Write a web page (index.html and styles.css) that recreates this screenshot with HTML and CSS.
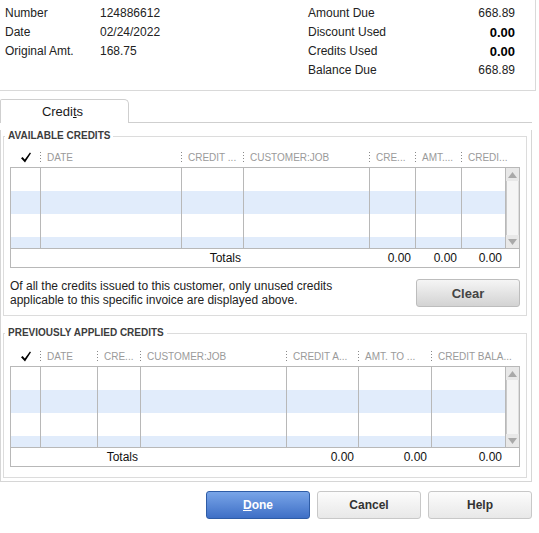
FILE: index.html
```html
<!DOCTYPE html>
<html>
<head>
<meta charset="utf-8">
<link rel="stylesheet" href="styles.css">
</head>
<body>
<div class="top">
  <div class="info">
    <span>Number</span><span>124886612</span>
    <span>Date</span><span>02/24/2022</span>
    <span>Original Amt.</span><span>168.75</span>
  </div>
  <div class="sums">
    <span>Amount Due</span><span class="num">668.89</span>
    <span>Discount Used</span><span class="num strong">0.00</span>
    <span>Credits Used</span><span class="num strong">0.00</span>
    <span>Balance Due</span><span class="num">668.89</span>
  </div>
</div>

<div class="tabs">
  <div class="tab">Credi<u>t</u>s</div>
  <div class="tab-fill"></div>
</div>

<div class="panel">
  <fieldset class="group first">
    <legend>AVAILABLE CREDITS</legend>
    <div class="hdr cols1">
      <div class="hcell check"><svg class="tick" width="10" height="11" viewBox="0 0 10 11"><path d="M0 6.2 L1.6 5 L3.8 7.6 L8.9 0.4 L10 1.2 L4 10.6 Z" fill="#000"/></svg><span class="sep"></span></div>
      <div class="hcell"><span class="ht">DATE</span><span class="sep"></span></div>
      <div class="hcell"><span class="ht">CREDIT ...</span><span class="sep"></span></div>
      <div class="hcell"><span class="ht">CUSTOMER:JOB</span><span class="sep"></span></div>
      <div class="hcell"><span class="ht">CRE...</span><span class="sep"></span></div>
      <div class="hcell"><span class="ht">AMT....</span><span class="sep"></span></div>
      <div class="hcell open"><span class="ht">CREDI...</span></div>
      <div class="hcell"></div>
    </div>
    <div class="grid">
      <div class="body cols1">
        <div class="bcell"></div><div class="bcell"></div><div class="bcell"></div><div class="bcell"></div>
        <div class="bcell"></div><div class="bcell"></div><div class="bcell"></div>
        <div class="scroll">
          <div class="arrow"><svg width="9" height="6" viewBox="0 0 9 6"><path d="M4.5 0 L9 6 L0 6 Z" fill="#a9a9a9"/></svg></div>
          <div class="thumb"></div>
          <div class="arrow"><svg width="9" height="6" viewBox="0 0 9 6"><path d="M0 0 L9 0 L4.5 6 Z" fill="#a9a9a9"/></svg></div>
        </div>
      </div>
      <div class="totals cols1">
        <span></span><span></span><span class="tl">Totals</span><span></span>
        <span class="tv">0.00</span><span class="tv">0.00</span><span class="tv last">0.00</span><span></span>
      </div>
    </div>
    <div class="note-row">
      <p class="note">Of all the credits issued to this customer, only unused credits<br>applicable to this specific invoice are displayed above.</p>
      <button class="btn clear">Clear</button>
    </div>
  </fieldset>

  <fieldset class="group second">
    <legend>PREVIOUSLY APPLIED CREDITS</legend>
    <div class="hdr cols2">
      <div class="hcell check"><svg class="tick" width="10" height="11" viewBox="0 0 10 11"><path d="M0 6.2 L1.6 5 L3.8 7.6 L8.9 0.4 L10 1.2 L4 10.6 Z" fill="#000"/></svg><span class="sep"></span></div>
      <div class="hcell"><span class="ht">DATE</span><span class="sep"></span></div>
      <div class="hcell"><span class="ht">CRE...</span><span class="sep"></span></div>
      <div class="hcell"><span class="ht">CUSTOMER:JOB</span><span class="sep"></span></div>
      <div class="hcell"><span class="ht">CREDIT A...</span><span class="sep"></span></div>
      <div class="hcell"><span class="ht">AMT. TO ...</span><span class="sep"></span></div>
      <div class="hcell open"><span class="ht">CREDIT BALA...</span></div>
      <div class="hcell"></div>
    </div>
    <div class="grid">
      <div class="body cols2">
        <div class="bcell"></div><div class="bcell"></div><div class="bcell"></div><div class="bcell"></div>
        <div class="bcell"></div><div class="bcell"></div><div class="bcell"></div>
        <div class="scroll">
          <div class="arrow"><svg width="9" height="6" viewBox="0 0 9 6"><path d="M4.5 0 L9 6 L0 6 Z" fill="#a9a9a9"/></svg></div>
          <div class="thumb"></div>
          <div class="arrow"><svg width="9" height="6" viewBox="0 0 9 6"><path d="M0 0 L9 0 L4.5 6 Z" fill="#a9a9a9"/></svg></div>
        </div>
      </div>
      <div class="totals cols2">
        <span></span><span></span><span class="tl">Totals</span><span></span>
        <span class="tv">0.00</span><span class="tv">0.00</span><span class="tv last">0.00</span><span></span>
      </div>
    </div>
  </fieldset>
</div>

<div class="actions">
  <button class="btn primary"><u>D</u>one</button>
  <button class="btn plain">Cancel</button>
  <button class="btn plain">Help</button>
</div>
</body>
</html>
```

FILE: styles.css
```css
* { box-sizing: border-box; }

html, body {
  margin: 0;
  padding: 0;
  background: #fff;
}

body {
  width: 539px;
  height: 533px;
  overflow: hidden;
  font-family: "Liberation Sans", Arial, sans-serif;
  font-size: 12px;
  color: #222;
}

/* ---------- top summary ---------- */
.top {
  width: 536px;
  height: 91px;
  border-right: 1px solid #d9d9d9;
  border-bottom: 1px solid #d9d9d9;
  padding: 4px 0 0 5px;
  display: flex;
}

.info {
  display: grid;
  grid-template-columns: 95px auto;
  grid-auto-rows: 19px;
  line-height: 19px;
}

.sums {
  margin-left: auto;
  margin-right: 20px;
  width: 207px;
  display: grid;
  grid-template-columns: 1fr auto;
  grid-auto-rows: 19px;
  line-height: 19px;
}

.num { text-align: right; }
.strong { font-weight: bold; font-size: 13px; color: #000; }

/* ---------- tab ---------- */
.tabs {
  margin-top: 8px;
  width: 532px;
  display: flex;
  height: 24px;
}

.tab {
  width: 129px;
  height: 24px;
  border: 1px solid #cfcfcf;
  border-bottom: none;
  border-radius: 2px 5px 0 0;
  font-size: 13px;
  line-height: 23px;
  text-align: center;
  padding-right: 4px;
  color: #1a1a1a;
  background: #fff;
}

.tab-fill {
  flex: 1;
  border-bottom: 1px solid #cfcfcf;
}

/* ---------- panel ---------- */
.panel {
  width: 532px;
  border-left: 1px solid #d6d6d6;
  border-right: 1px solid #d6d6d6;
  border-bottom: 1px solid #d6d6d6;
  padding: 0 4px 3px 2px;
}

.group {
  margin: 0;
  padding: 0;
  border: 1px solid #dcdcdc;
  min-width: 0;
}

.group.first { margin-top: 7px; padding-bottom: 8px; }
.group.second { margin-top: 11px; padding-bottom: 10px; }

.group legend {
  margin-left: 1px;
  padding: 0 3px;
  font-size: 10px;
  font-weight: bold;
  line-height: 12px;
  color: #3c3c3c;
}

/* ---------- grids ---------- */
.cols1 { display: grid; grid-template-columns: 30px 141px 62px 126px 46px 46px 44px 13px; }
.cols2 { display: grid; grid-template-columns: 30px 57px 43px 146px 72px 73px 74px 13px; }

.hdr {
  margin-left: 7px;
  height: 20px;
  margin-top: 5px;
}
.group.second .hdr { margin-top: 7px; }

.hcell {
  display: flex;
  align-items: center;
  height: 20px;
  overflow: hidden;
  white-space: nowrap;
}

.hcell.open { overflow: visible; }

.hcell.check .tick { margin-left: 10px; }

.ht {
  padding-left: 6px;
  font-size: 10px;
  color: #9a9a9a;
}

.sep {
  margin-left: auto;
  flex: none;
  width: 1px;
  height: 10px;
  background: repeating-linear-gradient(to bottom, #8a8a8a 0 1px, transparent 1px 3px);
}

.grid {
  margin-left: 6px;
  width: 510px;
  border: 1px solid #b8b8b8;
}

.body {
  height: 80px;
  background: repeating-linear-gradient(to bottom, #ffffff 0 23px, #e1ecfb 23px 46px);
}

.bcell {
  border-right: 1px solid #b8b8b8;
}

.scroll {
  display: flex;
  flex-direction: column;
  background: #e8e8e8;
}

.arrow {
  height: 13px;
  display: flex;
  align-items: center;
  justify-content: center;
  background: #e8e8e8;
}

.thumb {
  flex: 1;
  background: #f5f5f5;
  border-left: 1px solid #c9c9c9;
  border-right: 1px solid #dedede;
}

.totals {
  height: 19px;
  border-top: 1px solid #b8b8b8;
  line-height: 18px;
  color: #111;
  background: #fff;
}

.tl { text-align: right; padding-right: 3px; }
.tv { text-align: right; padding-right: 5px; }
.tv.last { padding-right: 4px; }

/* ---------- note row ---------- */
.note-row {
  margin-top: 11px;
  display: flex;
  align-items: center;
  padding-left: 6px;
  padding-right: 6px;
}

.note {
  margin: 0;
  line-height: 14px;
  color: #222;
}

/* ---------- buttons ---------- */
.btn {
  font-family: "Liberation Sans", Arial, sans-serif;
  font-weight: bold;
  height: 28px;
  padding: 0;
  border-radius: 3px;
  cursor: default;
}

.clear {
  margin-left: auto;
  width: 104px;
  font-size: 13px;
  color: #444;
  border: 1px solid #bdbdbd;
  background: linear-gradient(to bottom, #f5f5f5, #d3d3d3);
}

.actions {
  display: flex;
  justify-content: flex-end;
  gap: 7px;
  margin-top: 9px;
  padding-right: 7px;
}

.actions .btn {
  width: 104px;
  font-size: 12px;
}

.primary {
  color: #fff;
  border: 1px solid #2e5ca6;
  background: linear-gradient(to bottom, #79a5e8, #3e6fc6);
}

.plain {
  color: #333;
  border: 1px solid #c8c8c8;
  background: linear-gradient(to bottom, #fcfcfc, #e8e8e8);
}
```
